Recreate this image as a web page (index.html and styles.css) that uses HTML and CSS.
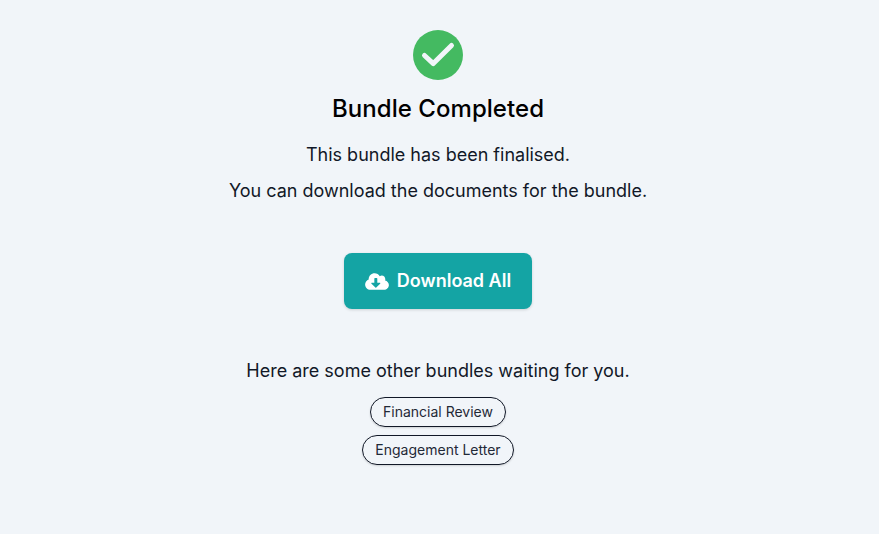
FILE: index.html
```html
<!DOCTYPE html>
<html lang="en">
<head>
<meta charset="utf-8">
<title>Bundle Completed</title>
<link rel="stylesheet" href="styles.css">
</head>
<body>
<main class="page">
  <svg class="check" viewBox="0 0 50 50" aria-hidden="true">
    <circle cx="25" cy="25" r="25" fill="#44ba61"/>
    <path d="M11.5 25.5 L20.3 33.6 L38.5 15.5" fill="none" stroke="#f1f5f9" stroke-width="5" stroke-linecap="round" stroke-linejoin="round"/>
  </svg>
  <h1 class="title">Bundle Completed</h1>
  <p class="line first">This bundle has been finalised.</p>
  <p class="line second">You can download the documents for the bundle.</p>
  <button class="download" type="button">
    <svg class="cloud" viewBox="0 0 640 512" aria-hidden="true">
      <path fill="#fff" d="M537.6 226.6c4.1-10.7 6.4-22.4 6.4-34.6 0-53-43-96-96-96-19.7 0-38.1 6-53.3 16.2C367 64.2 315.3 32 256 32c-88.4 0-160 71.6-160 160 0 2.7.1 5.4.2 8.1C40.2 219.8 0 273.2 0 336c0 79.5 64.5 144 144 144h368c70.7 0 128-57.3 128-128 0-61.9-44-113.6-102.4-125.4zm-132.9 88.7L299.3 420.7c-6.2 6.2-16.4 6.2-22.6 0L171.3 315.3c-10.1-10.1-2.9-27.3 11.3-27.3H248V176c0-8.8 7.2-16 16-16h48c8.8 0 16 7.2 16 16v112h65.4c14.2 0 21.4 17.2 11.3 27.3z"/>
    </svg>
    <span>Download All</span>
  </button>
  <p class="line others">Here are some other bundles waiting for you.</p>
  <a class="pill" href="#">Financial Review</a>
  <a class="pill" href="#">Engagement Letter</a>
</main>
</body>
</html>
```
FILE: styles.css
```css
html, body {
  margin: 0;
  height: 100%;
  background: #f1f5f9;
}
body {
  font-family: Inter, "Liberation Sans", sans-serif;
  color: #111827;
  overflow: hidden;
}
.page {
  display: flex;
  flex-direction: column;
  align-items: center;
  padding: 30px 3px 0 0;
}
.check {
  width: 50px;
  height: 50px;
  display: block;
}
.title {
  margin: 13px 0 0;
  font-size: 24px;
  line-height: 32px;
  font-weight: 500;
  letter-spacing: 0.05px;
  color: #000;
}
.line {
  margin: 0;
  font-size: 18px;
  line-height: 28px;
}
.first { margin-top: 16px; }
.second { margin-top: 8px; }
.download {
  margin-top: 48px;
  width: 188px;
  height: 56px;
  display: flex;
  align-items: center;
  justify-content: center;
  gap: 8px;
  border: 0;
  border-radius: 8px;
  background: #14a4a4;
  color: #fff;
  font: 600 18px/28px Inter, "Liberation Sans", sans-serif;
  box-shadow: 0 1px 3px rgba(0,0,0,.15);
}
.cloud {
  width: 24px;
  height: 19px;
  display: block;
}
.others { margin-top: 48px; }
.pill {
  box-sizing: border-box;
  height: 30px;
  margin-top: 8px;
  padding: 0 12.5px;
  display: flex;
  align-items: center;
  border: 1px solid #111827;
  border-radius: 15px;
  font-size: 14px;
  line-height: 20px;
  color: #1f2937;
  text-decoration: none;
  box-shadow: 0 1px 2px rgba(0,0,0,.15);
}
.others + .pill { margin-top: 12px; }
```
